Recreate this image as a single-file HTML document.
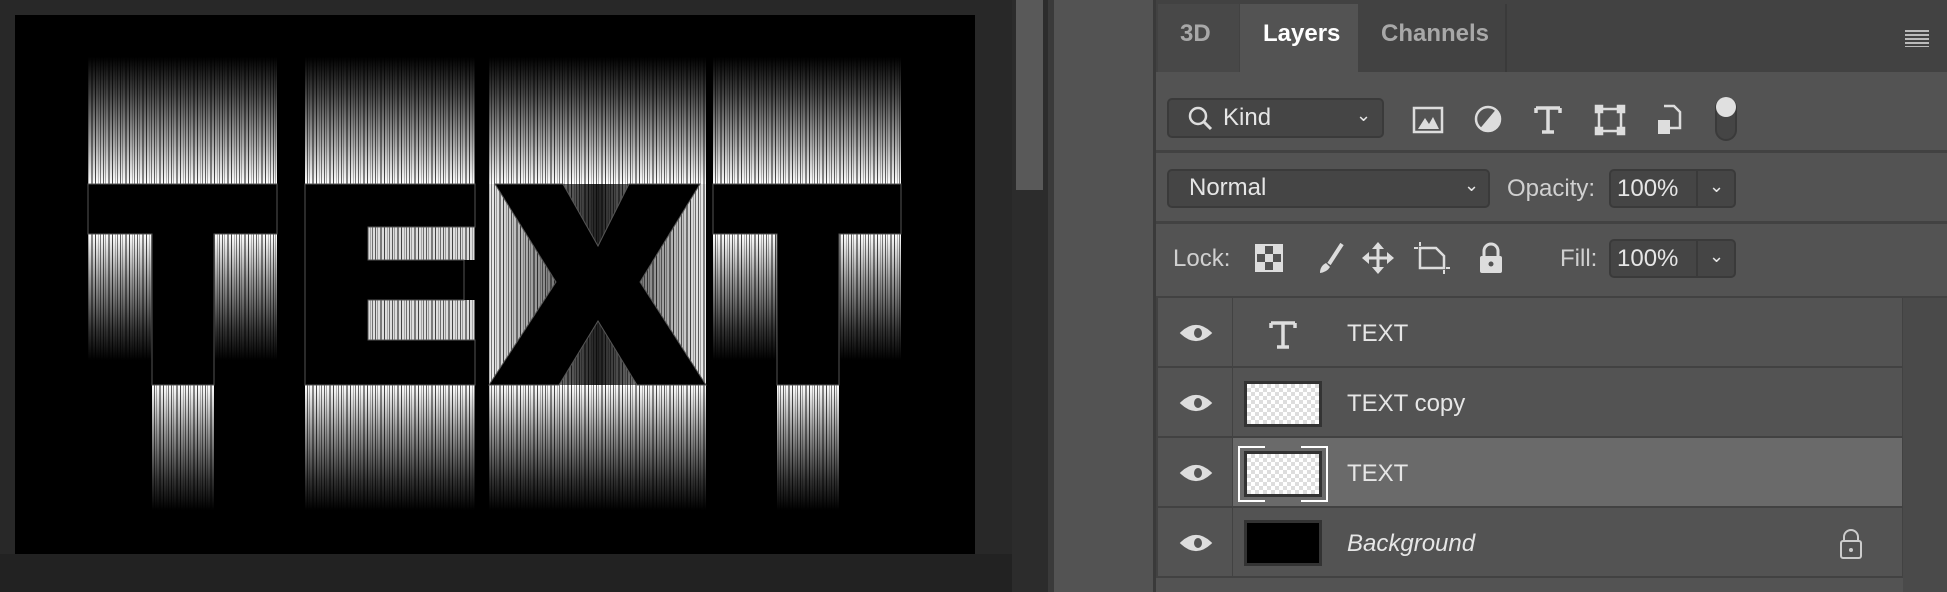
<!DOCTYPE html>
<html><head><meta charset="utf-8"><style>
*{margin:0;padding:0;box-sizing:border-box}
body{width:1947px;height:592px;background:#282828;position:relative;overflow:hidden;font-family:"Liberation Sans Narrow","Liberation Sans",sans-serif;color:#e6e6e6}
.a{position:absolute}
.t{position:absolute;white-space:nowrap;font-size:24px;line-height:1}
.box{position:absolute;background:#454545;border:2px solid #3a3a3a;border-radius:5px}
.row{position:absolute;left:1233px;width:669px;height:68px;background:#535353}
.eye{position:absolute;left:1158px;width:74px;height:68px;background:#535353}
.thumb{position:absolute;left:1244px;width:78px;height:46px;border:3px solid #333;background-color:#fff;background-image:linear-gradient(45deg,#ddd 25%,transparent 25%,transparent 75%,#ddd 75%),linear-gradient(45deg,#ddd 25%,transparent 25%,transparent 75%,#ddd 75%);background-size:8px 8px;background-position:0 0,4px 4px}
</style></head><body>
<div class="a" style="left:0;top:554px;width:1012px;height:38px;background:#222"></div>
<svg class="a" style="left:15px;top:15px" width="960" height="539" viewBox="15 15 960 539">
<defs>
<linearGradient id="up" x1="0" y1="1" x2="0" y2="0"><stop offset="0" stop-color="#fff"/><stop offset="0.3" stop-color="#aaa"/><stop offset="0.7" stop-color="#444"/><stop offset="1" stop-color="#000"/></linearGradient>
<linearGradient id="dn" x1="0" y1="0" x2="0" y2="1"><stop offset="0" stop-color="#fff"/><stop offset="0.35" stop-color="#999"/><stop offset="0.75" stop-color="#333"/><stop offset="1" stop-color="#000"/></linearGradient>
<linearGradient id="mid" x1="0" y1="0" x2="1" y2="0"><stop offset="0" stop-color="#eee"/><stop offset="0.35" stop-color="#666"/><stop offset="0.5" stop-color="#222"/><stop offset="0.65" stop-color="#666"/><stop offset="1" stop-color="#eee"/></linearGradient>
<pattern id="st" width="17" height="10" patternUnits="userSpaceOnUse"><rect x="1" width="1" height="10" fill="#000" opacity=".6"/><rect x="3" width="1" height="10" fill="#000" opacity=".3"/><rect x="6" width="2" height="10" fill="#000" opacity=".45"/><rect x="10" width="1" height="10" fill="#000" opacity=".7"/><rect x="13" width="1" height="10" fill="#000" opacity=".25"/><rect x="15" width="1" height="10" fill="#000" opacity=".5"/></pattern>
</defs>
<rect x="15" y="15" width="960" height="539" fill="#000"/>
<g>
<rect x="88" y="57" width="189" height="127" fill="url(#up)"/>
<rect x="305" y="57" width="170" height="127" fill="url(#up)"/>
<rect x="489" y="57" width="217" height="127" fill="url(#up)"/>
<rect x="713" y="57" width="188" height="127" fill="url(#up)"/>
<rect x="88" y="234" width="189" height="126" fill="url(#dn)"/>
<rect x="713" y="234" width="188" height="126" fill="url(#dn)"/>
<rect x="152" y="385" width="62" height="125" fill="url(#dn)"/>
<rect x="777" y="385" width="62" height="125" fill="url(#dn)"/>
<rect x="305" y="385" width="170" height="125" fill="url(#dn)"/>
<rect x="489" y="385" width="217" height="125" fill="url(#dn)"/>
<rect x="489" y="184" width="217" height="201" fill="url(#mid)"/>
<rect x="368" y="227" width="107" height="33" fill="#ddd"/>
<rect x="368" y="300" width="107" height="40" fill="#ddd"/>
<rect x="15" y="15" width="960" height="539" fill="url(#st)"/>
</g>
<g fill="#000" stroke="#555" stroke-width="1">
<path d="M88 184H277V234H214V385H152V234H88Z"/>
<path d="M713 184H901V234H839V385H777V234H713Z"/>
<path d="M305 184H475V227H368V260H464V300H368V340H475V385H305Z"/>
<path d="M495 184H563L598 246L629 184H700L640 282L706 385H637L598 321L559 385H489L556 282Z"/>
</g>
</svg>
<!-- scrollbar -->
<div class="a" style="left:1012px;top:0;width:36px;height:592px;background:#2c2c2c"></div>
<div class="a" style="left:1016px;top:0;width:27px;height:190px;background:#595959"></div>
<div class="a" style="left:1048px;top:0;width:6px;height:592px;background:#3a3a3a"></div>
<div class="a" style="left:1054px;top:0;width:101px;height:592px;background:#535353"></div>
<div class="a" style="left:1153px;top:0;width:3px;height:592px;background:#3a3a3a"></div>
<!-- panel -->
<div class="a" style="left:1156px;top:0;width:791px;height:592px;background:#535353"></div>
<div class="a" style="left:1156px;top:0;width:791px;height:72px;background:#424242"></div>
<div class="a" style="left:1158px;top:4px;width:81px;height:68px;background:#484848"></div>
<div class="a" style="left:1240px;top:4px;width:118px;height:70px;background:#535353"></div>
<div class="a" style="left:1359px;top:4px;width:148px;height:68px;background:#424242;border-right:2px solid #3a3a3a"></div>
<div class="t" style="left:1180px;top:22px;color:#a8a8a8;font-weight:bold">3D</div>
<div class="t" style="left:1263px;top:22px;color:#fff;font-weight:bold">Layers</div>
<div class="t" style="left:1381px;top:22px;color:#a8a8a8;font-weight:bold">Channels</div>
<div class="a" style="left:1905px;top:30px;width:24px;height:17px;background:repeating-linear-gradient(#bbb 0 2px,transparent 2px 4px)"></div>
<!-- row separators -->
<div class="a" style="left:1156px;top:150px;width:791px;height:3px;background:#424242"></div>
<div class="a" style="left:1156px;top:221px;width:791px;height:3px;background:#424242"></div>
<div class="a" style="left:1156px;top:296px;width:791px;height:2px;background:#424242"></div>
<!-- kind -->
<div class="box" style="left:1167px;top:98px;width:217px;height:40px"></div>
<svg class="a" style="left:1186px;top:104px" width="30" height="30"><circle cx="12" cy="12" r="8" fill="none" stroke="#ddd" stroke-width="2.5"/><path d="M18 18L25 25" stroke="#ddd" stroke-width="3"/></svg>
<div class="t" style="left:1223px;top:106px">Kind</div>
<div class="t" style="left:1356px;top:106px;font-size:18px">⌄</div>
<svg class="a" style="left:1412px;top:102px" width="290" height="40" fill="none" stroke="#ddd" stroke-width="2.5">
<rect x="2" y="6" width="28" height="24"/><path d="M6 27L13 16L17 22L21 15L27 27Z" fill="#ddd" stroke="none"/>
<circle cx="76" cy="17" r="12"/><path d="M76 5A12 12 0 0 1 76 29Z" fill="#ddd" stroke="none" transform="rotate(40 76 17)"/>
<path d="M124 6H148M136 6V30M130 30H142M124 6V11M148 6V11" stroke-width="3.5"/>
<rect x="187" y="7" width="22" height="22"/><rect x="184" y="4" width="6" height="6" fill="#ddd"/><rect x="206" y="4" width="6" height="6" fill="#ddd"/><rect x="184" y="26" width="6" height="6" fill="#ddd"/><rect x="206" y="26" width="6" height="6" fill="#ddd"/>
<path d="M252 4H262L268 10V26H258" /><rect x="246" y="18" width="12" height="14" fill="#ddd" stroke="none"/>
</svg>
<div class="a" style="left:1715px;top:97px;width:22px;height:44px;border:2px solid #3a3a3a;border-radius:11px;background:#454545"></div>
<div class="a" style="left:1716px;top:97px;width:20px;height:20px;border-radius:10px;background:#e0e0e0"></div>
<!-- blend -->
<div class="box" style="left:1167px;top:169px;width:323px;height:39px"></div>
<div class="t" style="left:1189px;top:176px">Normal</div>
<div class="t" style="left:1464px;top:176px;font-size:18px">⌄</div>
<div class="t" style="left:1507px;top:177px;color:#d0d0d0">Opacity:</div>
<div class="box" style="left:1609px;top:169px;width:127px;height:39px"></div>
<div class="a" style="left:1696px;top:171px;width:2px;height:35px;background:#3a3a3a"></div>
<div class="t" style="left:1617px;top:177px">100%</div>
<div class="t" style="left:1709px;top:177px;font-size:18px">⌄</div>
<!-- lock -->
<div class="t" style="left:1173px;top:247px;color:#d0d0d0">Lock:</div>
<svg class="a" style="left:1254px;top:242px" width="260" height="34" fill="#ddd" stroke="#ddd">
<rect x="2" y="3" width="26" height="26" fill="none" stroke-width="2"/><rect x="2" y="3" width="9" height="9" stroke="none"/><rect x="19" y="3" width="9" height="9" stroke="none"/><rect x="11" y="12" width="8" height="8" stroke="none"/><rect x="2" y="20" width="9" height="9" stroke="none"/><rect x="19" y="20" width="9" height="9" stroke="none"/>
<path d="M88 2L75 22" stroke-width="4" fill="none"/><path d="M72 21Q66 24 66 31Q73 30 76 25Z" stroke="none"/>
<path d="M124 3V29M111 16H137" stroke-width="3" fill="none"/><path d="M124 0L118 7H130ZM124 32L118 25H130ZM108 16L115 10V22ZM140 16L133 10V22Z" stroke="none"/>
<path d="M166 6H182L190 14V26H166Z" fill="none" stroke-width="2.5"/><path d="M160 6H164M166 0V4M190 28V32M192 26H196" stroke-width="2" fill="none"/>
<rect x="226" y="14" width="22" height="17" rx="2" stroke="none"/><path d="M230 15V9A7 7 0 0 1 244 9V15" fill="none" stroke-width="3"/><circle cx="237" cy="22" r="2.5" fill="#535353" stroke="none"/>
</svg>
<div class="t" style="left:1560px;top:247px;color:#d0d0d0">Fill:</div>
<div class="box" style="left:1609px;top:239px;width:127px;height:39px"></div>
<div class="a" style="left:1696px;top:241px;width:2px;height:35px;background:#3a3a3a"></div>
<div class="t" style="left:1617px;top:247px">100%</div>
<div class="t" style="left:1709px;top:247px;font-size:18px">⌄</div>
<!-- layer list -->
<div class="a" style="left:1156px;top:298px;width:791px;height:294px;background:#424242"></div>
<div class="a" style="left:1903px;top:298px;width:44px;height:294px;background:#4a4a4a"></div>
<div class="eye" style="top:298px"></div><div class="row" style="top:298px"></div>
<div class="eye" style="top:368px"></div><div class="row" style="top:368px"></div>
<div class="eye" style="top:438px"></div><div class="row" style="top:438px;background:#6a6a6a"></div>
<div class="eye" style="top:508px"></div><div class="row" style="top:508px"></div>
<div class="a" style="left:1156px;top:578px;width:747px;height:14px;background:#535353"></div>
<svg class="a" style="left:1178px;top:298px" width="40" height="280" fill="none">
<g stroke="#ddd" stroke-width="3"><path d="M4 35Q18 22 32 35Q18 48 4 35Z" fill="#ddd"/></g><ellipse cx="20" cy="35" rx="4" ry="5" fill="#535353"/>
<g transform="translate(0,70)"><path d="M4 35Q18 22 32 35Q18 48 4 35Z" fill="#ddd" stroke="#ddd" stroke-width="3"/><ellipse cx="20" cy="35" rx="4" ry="5" fill="#535353"/></g>
<g transform="translate(0,140)"><path d="M4 35Q18 22 32 35Q18 48 4 35Z" fill="#ddd" stroke="#ddd" stroke-width="3"/><ellipse cx="20" cy="35" rx="4" ry="5" fill="#535353"/></g>
<g transform="translate(0,210)"><path d="M4 35Q18 22 32 35Q18 48 4 35Z" fill="#ddd" stroke="#ddd" stroke-width="3"/><ellipse cx="20" cy="35" rx="4" ry="5" fill="#535353"/></g>
</svg>
<svg class="a" style="left:1268px;top:320px" width="30" height="30"><path d="M3 3H27M15 3V27M9 27H21M3 3V8M27 3V8" stroke="#ddd" stroke-width="3.5" fill="none"/></svg>
<div class="t" style="left:1347px;top:322px">TEXT</div>
<div class="thumb" style="top:381px"></div>
<div class="t" style="left:1347px;top:392px">TEXT copy</div>
<div class="a" style="left:1238px;top:446px;width:90px;height:56px;border:2px solid #fff;clip-path:polygon(0 0,30% 0,30% 8%,70% 8%,70% 0,100% 0,100% 100%,70% 100%,70% 92%,30% 92%,30% 100%,0 100%)"></div>
<div class="thumb" style="top:451px"></div>
<div class="t" style="left:1347px;top:462px">TEXT</div>
<div class="thumb" style="top:520px;background:#000;border-color:#333"></div>
<div class="t" style="left:1347px;top:532px;font-style:italic">Background</div>
<svg class="a" style="left:1838px;top:528px" width="26" height="32"><path d="M6 13V9A7 7 0 0 1 20 9V13" stroke="#ccc" stroke-width="2" fill="none"/><rect x="3" y="13" width="20" height="17" rx="2" stroke="#ccc" stroke-width="2" fill="none"/><circle cx="13" cy="22" r="2" fill="#ccc"/></svg>
</body></html>
